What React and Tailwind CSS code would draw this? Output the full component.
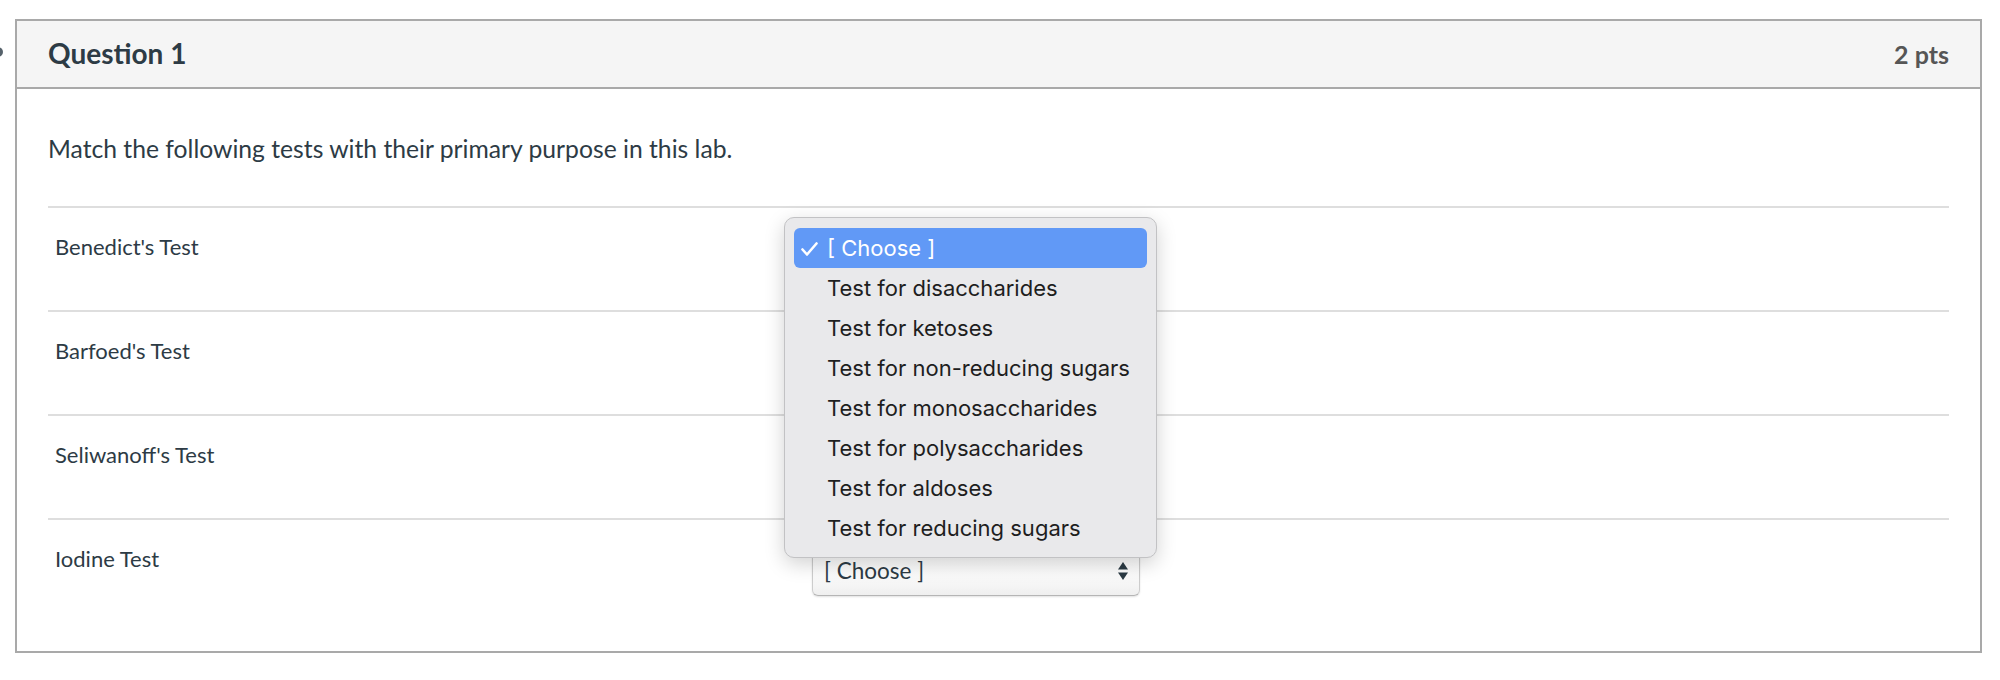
import React from "react";

const rows = ["Benedict's Test", "Barfoed's Test", "Seliwanoff's Test", "Iodine Test"];
const options = [
  "[ Choose ]",
  "Test for disaccharides",
  "Test for ketoses",
  "Test for non-reducing sugars",
  "Test for monosaccharides",
  "Test for polysaccharides",
  "Test for aldoses",
  "Test for reducing sugars",
];

function SelectBox() {
  return (
    <div className="mt-[2px] w-[328px] h-[50px] rounded-[6px] border border-[#cdcdcd] border-b-[#b5b5b5] bg-[linear-gradient(#ffffff,#fbfbfb_60%,#efefef)] shadow-[0_1px_2px_rgba(0,0,0,0.12)] flex items-center justify-between pl-[11px] pr-[10px]">
      <span className="text-[22.5px] text-[#2d3b45] leading-none">[ Choose ]</span>
      <svg width="10" height="19" viewBox="0 0 10 19" className="mr-[1px]">
        <polygon points="5,0 10,7.5 0,7.5" fill="#2b3a44" />
        <polygon points="0,10.5 10,10.5 5,18" fill="#2b3a44" />
      </svg>
    </div>
  );
}

export default function App() {
  return (
    <div
      className="relative w-[2000px] h-[680px] bg-white overflow-hidden"
      style={{ fontFamily: "Lato, 'Liberation Sans', sans-serif" }}
    >
      <div className="absolute left-[-7px] top-[47px] w-[10px] h-[10px] rounded-full bg-[#56626b]" />
      <div className="ml-[15px] mt-[19px] w-[1967px] border-2 border-[#a9a9a9]">
        <div className="h-[68px] bg-[#f5f5f5] border-b-2 border-[#a9a9a9] flex items-center justify-between px-[31px]">
          <span className="text-[28px] font-bold text-[#2d3b45] leading-[1.2]">Question 1</span>
          <span className="text-[25px] font-bold text-[#565656] leading-[1.2]">2 pts</span>
        </div>
        <div className="px-[31px] pt-[43px] pb-[29px]">
          <p className="text-[24.7px] leading-[33px] text-[#2d3b45] mb-[41px]">
            Match the following tests with their primary purpose in this lab.
          </p>
          {rows.map((r) => (
            <div key={r} className="border-t-2 border-[#dedede] flex items-start pt-[24px] pb-[26px]">
              <div className="w-[764px] shrink-0 pl-[7px] text-[22px] leading-[30px] text-[#2d3b45]">{r}</div>
              <SelectBox />
            </div>
          ))}
        </div>
      </div>

      <div
        className="absolute left-[784px] top-[217px] w-[373px] h-[341px] rounded-[10px] bg-[#e9e9eb] border border-[#c2c2c4] shadow-[0_6px_20px_rgba(0,0,0,0.18)] px-[9px] py-[10px]"
        style={{ fontFamily: "Inter, 'Noto Sans', sans-serif" }}
      >
        {options.map((o, i) => (
          <div
            key={o}
            className={
              i === 0
                ? "relative h-[40px] rounded-[6px] bg-[#6199f6] text-white flex items-center pl-[33px] text-[22px]"
                : "relative h-[40px] flex items-center pl-[33px] text-[22px] text-[#1e1e1e]"
            }
          >
            {i === 0 && (
              <svg width="17" height="14" viewBox="0 0 17 14" className="absolute left-[7px] top-[14px]">
                <polyline points="1.5,7.5 6,12.5 15.5,1.5" fill="none" stroke="white" strokeWidth="2.6" strokeLinecap="round" strokeLinejoin="round" />
              </svg>
            )}
            <span>{o}</span>
          </div>
        ))}
      </div>
    </div>
  );
}
